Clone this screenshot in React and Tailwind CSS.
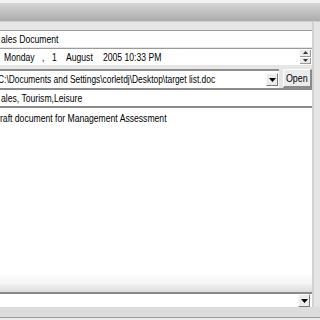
import React from "react";

function Tri() {
  return (
    <svg width="7" height="4" viewBox="0 0 7 4" className="block">
      <polygon points="0,0 7,0 3.5,4" fill="#000" />
    </svg>
  );
}

function SmallTri({ up = false }) {
  return (
    <svg width="5" height="3" viewBox="0 0 5 3" className="block">
      {up ? <polygon points="0,3 5,3 2.5,0" fill="#333" /> : <polygon points="0,0 5,0 2.5,3" fill="#333" />}
    </svg>
  );
}

function DropBtn() {
  return (
    <div className="w-[12px] h-[13px] shrink-0 bg-[#ececec] border-t border-l border-t-[#fafafa] border-l-[#fafafa] border-b border-r border-b-[#7a7a7a] border-r-[#7a7a7a] flex items-center justify-center">
      <Tri />
    </div>
  );
}

function T({ children, className = "scale-x-[0.82]" }) {
  return <span className={"inline-block whitespace-nowrap origin-left " + className}>{children}</span>;
}

export default function App() {
  return (
    <div className="w-[320px] h-[320px] overflow-hidden bg-[#e6e6e6] flex flex-col font-['Liberation_Sans',Arial,sans-serif] text-[10.5px] leading-none text-black">
      <div className="h-[22px] shrink-0 border-t-[3px] border-[#f2f2f2] bg-gradient-to-b from-[#d6d6d6] to-[#acacac] border-b border-b-[#cfcfcf]" />
      <div className="flex flex-1 min-h-0">
        <div className="flex-1 flex flex-col pt-[8px] min-w-0">
          <div className="h-[17px] shrink-0 border-t border-[#9a9a9a] bg-white flex items-center pl-[1px]">
            <T>ales Document</T>
          </div>
          <div className="h-[17px] mt-[1px] shrink-0 border-t border-[#9a9a9a] bg-white flex items-center pl-[4px]">
            <div className="w-[38px]"><T>Monday</T></div>
            <div className="w-[10px]"><T>,</T></div>
            <div className="w-[14px]"><T>1</T></div>
            <div className="w-[37px]"><T>August</T></div>
            <div><T>2005 10:33 PM</T></div>
            <div className="ml-auto mr-[1px] w-[11px] h-[14px] flex flex-col gap-[1px]">
              <div className="flex-1 bg-[#ececec] border-b border-r border-[#9a9a9a] flex items-center justify-center"><SmallTri up /></div>
              <div className="flex-1 bg-[#ececec] border-b border-r border-[#9a9a9a] flex items-center justify-center"><SmallTri /></div>
            </div>
          </div>
          <div className="h-[19px] mt-[4px] shrink-0 flex">
            <div className="w-[279px] border-t-2 border-[#8c8c8c] bg-white flex items-center">
              <div className="w-[265px] h-full flex items-center overflow-hidden">
                <T className="scale-x-[0.8] ml-[-2px]">C:\Documents and Settings\corletdj\Desktop\target list.doc</T>
              </div>
              <div className="ml-auto mr-[1px]"><DropBtn /></div>
            </div>
            <div className="ml-[4px] flex-1 bg-[#ececec] border-t border-l border-[#fcfcfc] border-b-2 border-r-2 border-b-[#8a8a8a] border-r-[#8a8a8a] flex items-center justify-center">
              <span className="inline-block scale-x-[0.85]">Open</span>
            </div>
          </div>
          <div className="h-[18px] shrink-0 border-t-2 border-[#8c8c8c] bg-white flex items-center pl-[1px]">
            <T>ales, Tourism,Leisure</T>
          </div>
          <div className="h-[178px] shrink-0 border-t-2 border-[#8c8c8c] bg-gradient-to-b from-white from-[94%] to-[#f4f4f4] pt-[5px] flex flex-col items-start">
            <T>raft document for Management Assessment</T>
          </div>
          <div className="h-[8px] shrink-0 bg-gradient-to-b from-[#f2f2f2] to-[#dcdcdc]" />
          <div className="h-[15px] shrink-0 border-t-2 border-[#8a8a8a] bg-white flex items-center">
            <div className="ml-auto mr-[2px]"><DropBtn /></div>
          </div>
        </div>
        <div className="w-[8px] shrink-0 border-l-2 border-[#d2d2d2] bg-[#e4e4e4]" />
      </div>
      <div className="h-[13px] shrink-0 bg-[#dcdcdc] flex flex-col">
        <div className="h-[10px]" />
        <div className="h-[1px] bg-[#9c9c9c]" />
        <div className="flex-1 bg-[#ececec]" />
      </div>
    </div>
  );
}
